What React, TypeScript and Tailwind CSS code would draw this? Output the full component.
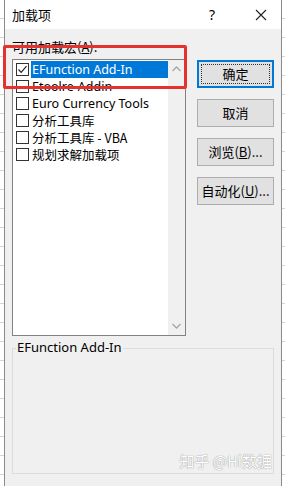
import React from "react";

const cjk = { fontFamily: '"Noto Sans CJK SC", "Noto Sans", sans-serif' };
const lat = { fontFamily: '"Noto Sans", "Noto Sans CJK SC", sans-serif' };

function Check({ checked }: { checked?: boolean }) {
  return (
    <div className="w-[13px] h-[13px] border border-[#333] bg-white flex items-center justify-center shrink-0">
      {checked && (
        <svg width="11" height="11" viewBox="0 0 11 11">
          <path d="M1.5 5.5 L4.2 8.3 L9.5 2.2" fill="none" stroke="#222" strokeWidth="1.2" />
        </svg>
      )}
    </div>
  );
}

function Item({ label, checked, selected, latin }: { label: string; checked?: boolean; selected?: boolean; latin?: boolean }) {
  return (
    <div className="h-[17px] flex items-center pl-[3px] gap-[2px] shrink-0 overflow-hidden">
      <Check checked={checked} />
      <span
        className={`h-[17px] text-[12.5px] leading-[17px] pl-[1px] pr-[2px] whitespace-nowrap overflow-hidden ${selected ? "bg-[#0078d7] text-white flex-1" : "text-black"}`}
        style={latin ? lat : cjk}
      >
        {label}
      </span>
    </div>
  );
}

function Btn({ children, primary }: { children: React.ReactNode; primary?: boolean }) {
  return (
    <div
      className={`h-[28px] w-[77px] flex items-center justify-center bg-[#e1e1e1] text-[13px] text-black ${primary ? "border-2 border-[#0078d7]" : "border border-[#adadad]"}`}
      style={cjk}
    >
      {primary ? (
        <div className="w-[69px] h-[20px] border border-dotted border-[#333] flex items-center justify-center">{children}</div>
      ) : (
        children
      )}
    </div>
  );
}

function Strip() {
  return (
    <div className="flex flex-col bg-white h-full">
      {Array.from({ length: 26 }).map((_, i) => (
        <div key={i} className="h-[19px] border-b border-[#d4d4d4] shrink-0" />
      ))}
    </div>
  );
}

export default function App() {
  return (
    <div className="w-[285px] h-[486px] flex overflow-hidden relative bg-white">
      <div className="w-[4px] h-full overflow-hidden"><Strip /></div>
      <div className="w-[278px] h-full border-x border-[#8a8a8a] flex flex-col bg-[#f0f0f0]">
        <div className="h-[29px] bg-white flex items-center pl-[7px] shrink-0">
          <span className="text-[13px] text-black flex-1" style={cjk}>加载项</span>
          <span className="text-[14px] text-black w-[12px] mr-[34px]" style={lat}>?</span>
          <svg width="12" height="12" viewBox="0 0 12 12" className="mr-[14px]">
            <path d="M1 1 L11 11 M11 1 L1 11" stroke="#222" strokeWidth="1.1" />
          </svg>
        </div>
        <div className="flex pl-[7px] pt-[10px] gap-[11px]">
          <div className="flex flex-col w-[174px]">
            <div className="text-[13px] leading-[16px] text-black h-[20px]" style={cjk}>
              可用加载宏(<span className="underline">A</span>):
            </div>
            <div className="h-[277px] border border-[#828282] bg-white flex">
              <div className="flex-1 flex flex-col pt-[1px]">
                <Item label="EFunction Add-In" checked selected latin />
                <Item label="Etoolre-Addin" latin />
                <Item label="Euro Currency Tools" latin />
                <Item label="分析工具库" />
                <Item label="分析工具库 - VBA" />
                <Item label="规划求解加载项" />
              </div>
              <div className="w-[17px] bg-[#f0f0f0] flex flex-col items-center justify-between py-[6px]">
                <svg width="9" height="6" viewBox="0 0 9 6"><path d="M0.5 5 L4.5 1 L8.5 5" fill="none" stroke="#a6a6a6" strokeWidth="1.3" /></svg>
                <svg width="9" height="6" viewBox="0 0 9 6"><path d="M0.5 1 L4.5 5 L8.5 1" fill="none" stroke="#a6a6a6" strokeWidth="1.3" /></svg>
              </div>
            </div>
          </div>
          <div className="flex flex-col gap-[11px] pt-[21px]">
            <Btn primary>确定</Btn>
            <Btn>取消</Btn>
            <Btn>浏览(<span className="underline">B</span>)...</Btn>
            <Btn>自动化(<span className="underline">U</span>)...</Btn>
          </div>
        </div>
        <div className="mx-[7px] mt-[12px] h-[126px] border border-[#dcdcdc] relative">
          <span className="absolute left-[3px] top-[-10px] bg-[#f0f0f0] px-[1px] text-[13px] leading-[17px] text-black" style={lat}>
            EFunction Add-In
          </span>
          <span
            className="absolute right-[1px] bottom-[1px] text-[15px] text-white"
            style={{ ...cjk, textShadow: "0 0 1px #999, 0 0 1px #999" }}
          >
            知乎 @Hi数据
          </span>
        </div>
      </div>
      <div className="w-[3px] h-full overflow-hidden"><Strip /></div>
      <div className="absolute left-[3px] top-[45px] w-[184px] h-[44px] border-[3px] border-[#e5322d] rounded-[2px]" />
    </div>
  );
}
